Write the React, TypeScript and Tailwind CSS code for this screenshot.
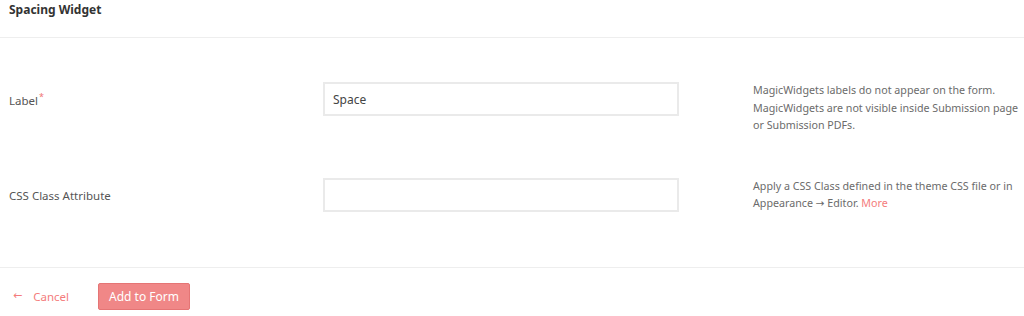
import React from "react"

const font = { fontFamily: '"Noto Sans", "Open Sans", sans-serif' }
const arrowFont = { fontFamily: '"DejaVu Sans", sans-serif' }

const FieldRow = ({
  label,
  required,
  value,
  help,
  className,
}: {
  label: string
  required?: boolean
  value: string
  help: React.ReactNode
  className?: string
}) => (
  <div className={`flex items-start pl-[9px] ${className ?? ""}`}>
    <div className="w-[314px] h-[34px] pt-[3px] flex items-center text-[11.5px] text-[#555]">
      <span>
        {label}
        {required && <sup className="text-[#f07474] text-[9px] ml-[1px]">*</sup>}
      </span>
    </div>
    <input
      readOnly
      value={value}
      className="w-[356px] h-[34px] border-2 border-[#eaeaea] bg-white px-[8px] text-[12px] text-[#444] outline-none"
      style={font}
    />
    <div className="ml-[74px] w-[268px] text-[10.7px] leading-[17.5px] text-[#6b6b6b]">{help}</div>
  </div>
)

export default function App() {
  return (
    <div className="w-[1024px] h-[316px] bg-white" style={font}>
      <div className="h-[38px] border-b border-[#eeeeee] pl-[9px] pt-[1px]">
        <h1 className="text-[12px] font-bold text-[#333]">Spacing Widget</h1>
      </div>
      <div className="h-[230px] border-b border-[#eeeeee]">
        <FieldRow
          className="pt-[44px]"
          label="Label"
          required
          value="Space"
          help={
            <>
              MagicWidgets labels do not appear on the form.
              <br />
              MagicWidgets are not visible inside Submission page or Submission PDFs.
            </>
          }
        />
        <FieldRow
          className="pt-[43px]"
          label="CSS Class Attribute"
          value=""
          help={
            <>
              Apply a CSS Class defined in the theme CSS file or in Appearance{" "}
              <span className="text-[10.5px] leading-[10px]" style={arrowFont}>→</span> Editor.{" "}
              <span className="text-[#f47c7c]">More</span>
            </>
          }
        />
      </div>
      <div className="flex items-center pl-[13px] pt-[15px]">
        <button className="flex items-center gap-[11px] text-[11.5px] text-[#f47c7c]">
          <span className="text-[11px]" style={arrowFont}>←</span>
          <span>Cancel</span>
        </button>
        <button className="ml-[29px] h-[27px] px-[10px] rounded-[2px] border border-[#e57575] bg-[#f08787] text-[12px] text-white">
          Add to Form
        </button>
      </div>
    </div>
  )
}
